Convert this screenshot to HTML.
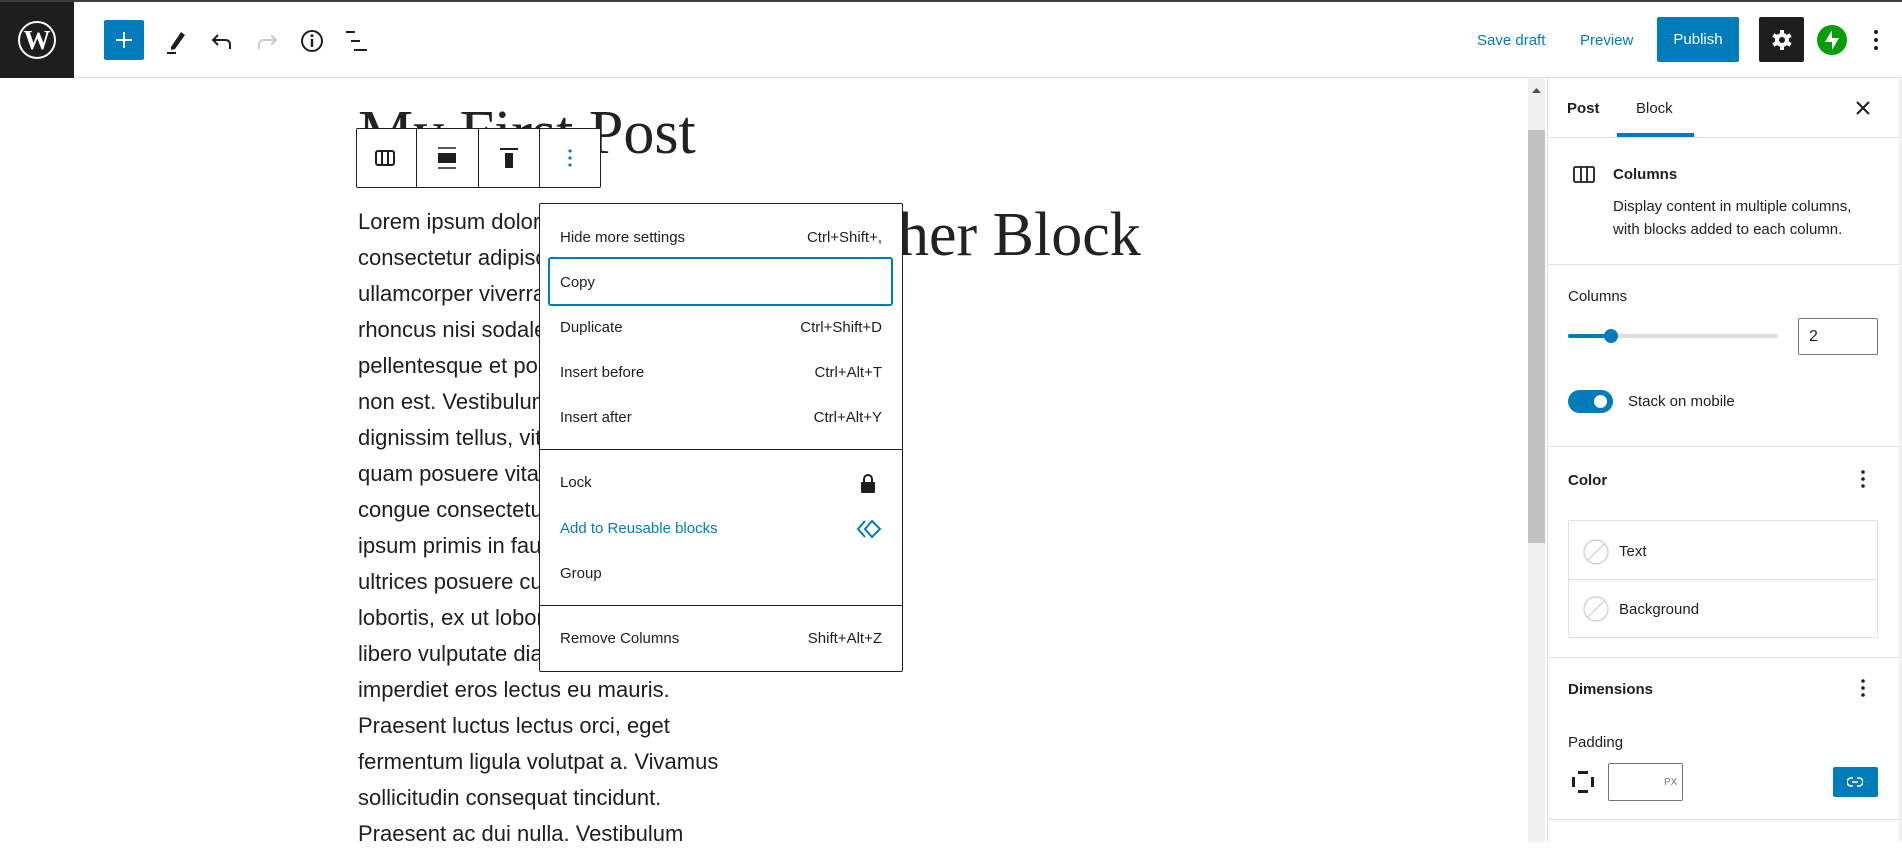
<!DOCTYPE html>
<html><head><meta charset="utf-8"><style>
*{margin:0;padding:0;box-sizing:border-box}
body{width:1902px;height:842px;overflow:hidden;background:#fff;font-family:"Liberation Sans",sans-serif;color:#1e1e1e;position:relative}
.a{position:absolute}
.ui{font-size:15px;white-space:nowrap}
.p{position:absolute;left:358px;font-size:22px;white-space:nowrap;color:#1e1e1e;line-height:36px}
.mi{position:absolute;left:560px;font-size:15px;white-space:nowrap}
.ms{position:absolute;right:1020px;font-size:15px;white-space:nowrap}
.hr{position:absolute;height:1px;background:#e0e0e0}
</style></head><body>
<div class="a" style="left:0;top:0;width:1902px;height:2px;background:#3c3c3c"></div>
<!-- header -->
<div class="a" style="left:0;top:2px;width:74px;height:76px;background:#1e1e1e"></div>
<svg class="a" style="left:17px;top:20px" width="40" height="40" viewBox="0 0 40 40">
<circle cx="20" cy="20" r="18" fill="none" stroke="#fff" stroke-width="2"/>
<text x="20" y="29" text-anchor="middle" font-family="Liberation Serif" font-weight="bold" font-size="27" fill="#fff">W</text></svg>
<div class="hr" style="left:74px;top:77px;width:1828px"></div>
<div class="a" style="left:104px;top:20px;width:40px;height:40px;background:#007cba;border-radius:2px"></div>
<svg class="a" style="left:104px;top:20px" width="40" height="40"><path d="M20 12v16M12 20h16" stroke="#fff" stroke-width="2"/></svg>
<svg class="a" style="left:165px;top:28px" width="24" height="26" viewBox="0 0 24 26"><path d="M6 19 L16 4 L20 7 L10 21 L6 22 Z" fill="#1e1e1e"/><path d="M2 25h9" stroke="#1e1e1e" stroke-width="2"/></svg>
<svg class="a" style="left:210px;top:29px" width="24" height="24" viewBox="0 0 24 24"><path d="M8 6 L3 11 L8 16 M3 11 H15 Q20 11 20 16 V20" fill="none" stroke="#1e1e1e" stroke-width="2"/></svg>
<svg class="a" style="left:255px;top:29px" width="24" height="24" viewBox="0 0 24 24"><path d="M16 6 L21 11 L16 16 M21 11 H9 Q4 11 4 16 V20" fill="none" stroke="#ccc" stroke-width="2"/></svg>
<svg class="a" style="left:300px;top:29px" width="24" height="24" viewBox="0 0 24 24"><circle cx="12" cy="12" r="10" fill="none" stroke="#1e1e1e" stroke-width="2"/><path d="M12 10v8" stroke="#1e1e1e" stroke-width="2.4"/><circle cx="12" cy="6.8" r="1.5" fill="#1e1e1e"/></svg>
<svg class="a" style="left:345px;top:29px" width="24" height="24" viewBox="0 0 24 24"><path d="M1 3h9M6 12h9M9 21h13" stroke="#1e1e1e" stroke-width="2"/></svg>
<div class="a ui" style="left:1477px;top:32px;color:#007cba">Save draft</div>
<div class="a ui" style="left:1580px;top:32px;color:#007cba">Preview</div>
<div class="a" style="left:1657px;top:17px;width:82px;height:45px;background:#007cba;border-radius:2px;color:#fff;font-size:15px;text-align:center;line-height:45px">Publish</div>
<div class="a" style="left:1759px;top:17px;width:45px;height:45px;background:#1e1e1e;border-radius:2px"></div>
<svg class="a" style="left:1770px;top:28px" width="24" height="24" viewBox="0 0 24 24"><g fill="#fff"><circle cx="12" cy="12" r="7"/><rect x="10" y="2" width="4" height="20"/><rect x="10" y="2" width="4" height="20" transform="rotate(60 12 12)"/><rect x="10" y="2" width="4" height="20" transform="rotate(120 12 12)"/></g><circle cx="12" cy="12" r="3" fill="#1e1e1e"/></svg>
<svg class="a" style="left:1817px;top:25px" width="30" height="30" viewBox="0 0 30 30"><circle cx="15" cy="15" r="15" fill="#069e08"/><path d="M15 5 V17 H8 Z M15 25 V13 H22 Z" fill="#fff"/></svg>
<svg class="a" style="left:1870px;top:28px" width="12" height="24"><circle cx="6" cy="4" r="2" fill="#1e1e1e"/><circle cx="6" cy="12" r="2" fill="#1e1e1e"/><circle cx="6" cy="20" r="2" fill="#1e1e1e"/></svg>

<!-- editor -->
<div class="a" style="left:358px;top:98px;font-family:'Liberation Serif',serif;font-size:62px;color:#222;white-space:nowrap">My First Post</div>
<div class="a" style="left:774px;top:200px;font-family:'Liberation Serif',serif;font-size:62px;color:#222;white-space:nowrap">Another Block</div>
<div class="p" style="top:204px">Lorem ipsum dolor sit amet,</div>
<div class="p" style="top:240px">consectetur adipiscing elit.</div>
<div class="p" style="top:276px">ullamcorper viverra nibh</div>
<div class="p" style="top:312px">rhoncus nisi sodales at</div>
<div class="p" style="top:348px">pellentesque et porta</div>
<div class="p" style="top:384px">non est. Vestibulum ac</div>
<div class="p" style="top:420px">dignissim tellus, vitae</div>
<div class="p" style="top:456px">quam posuere vitae</div>
<div class="p" style="top:492px">congue consectetur</div>
<div class="p" style="top:528px">ipsum primis in faucibus</div>
<div class="p" style="top:564px">ultrices posuere cubilia</div>
<div class="p" style="top:600px">lobortis, ex ut lobortis</div>
<div class="p" style="top:636px">libero vulputate diam</div>
<div class="p" style="top:672px">imperdiet eros lectus eu mauris.</div>
<div class="p" style="top:708px">Praesent luctus lectus orci, eget</div>
<div class="p" style="top:744px">fermentum ligula volutpat a. Vivamus</div>
<div class="p" style="top:780px">sollicitudin consequat tincidunt.</div>
<div class="p" style="top:816px">Praesent ac dui nulla. Vestibulum</div>

<!-- block toolbar -->
<div class="a" style="left:356px;top:128px;width:245px;height:60px;background:#fff;border:1px solid #1e1e1e;border-radius:2px"></div>
<div class="a" style="left:416px;top:128px;width:1px;height:60px;background:#1e1e1e"></div>
<div class="a" style="left:478px;top:128px;width:1px;height:60px;background:#1e1e1e"></div>
<div class="a" style="left:539px;top:128px;width:1px;height:60px;background:#1e1e1e"></div>
<svg class="a" style="left:375px;top:150px" width="20" height="16"><rect x="1" y="1" width="18" height="14" rx="2" fill="none" stroke="#1e1e1e" stroke-width="2"/><path d="M7 1v14M13 1v14" stroke="#1e1e1e" stroke-width="2"/></svg>
<svg class="a" style="left:437px;top:147px" width="20" height="22"><path d="M1 1h18M1 21h18" stroke="#1e1e1e" stroke-width="1.5"/><rect x="1" y="6" width="18" height="10" fill="#1e1e1e"/></svg>
<svg class="a" style="left:499px;top:148px" width="20" height="20"><path d="M1 1h18" stroke="#1e1e1e" stroke-width="2"/><rect x="6" y="5" width="8" height="15" fill="#1e1e1e"/></svg>
<svg class="a" style="left:566px;top:148px" width="8" height="20"><circle cx="4" cy="3" r="1.6" fill="#007cba"/><circle cx="4" cy="10" r="1.6" fill="#007cba"/><circle cx="4" cy="17" r="1.6" fill="#007cba"/></svg>

<!-- menu -->
<div class="a" style="left:539px;top:203px;width:364px;height:469px;background:#fff;border:1px solid #1e1e1e;border-radius:2px"></div>
<div class="mi" style="top:229px">Hide more settings</div><div class="ms" style="top:229px">Ctrl+Shift+,</div>
<div class="a" style="left:548px;top:257px;width:345px;height:49px;border:2px solid #007cba;border-radius:3px"></div>
<div class="mi" style="top:274px">Copy</div>
<div class="mi" style="top:319px">Duplicate</div><div class="ms" style="top:319px">Ctrl+Shift+D</div>
<div class="mi" style="top:364px">Insert before</div><div class="ms" style="top:364px">Ctrl+Alt+T</div>
<div class="mi" style="top:409px">Insert after</div><div class="ms" style="top:409px">Ctrl+Alt+Y</div>
<div class="a" style="left:540px;top:449px;width:362px;height:1px;background:#1e1e1e"></div>
<div class="mi" style="top:474px">Lock</div>
<svg class="a" style="left:859px;top:472px" width="18" height="22"><path d="M5 10V7a4 4 0 0 1 8 0v3" fill="none" stroke="#1e1e1e" stroke-width="2"/><rect x="2" y="10" width="14" height="11" rx="1" fill="#1e1e1e"/></svg>
<div class="mi" style="top:520px;color:#007cba">Add to Reusable blocks</div>
<svg class="a" style="left:856px;top:518px" width="26" height="22"><path d="M9 3 L2 11 L9 19 M16 3 L24 11 L16 19 L9 11 Z" fill="none" stroke="#007cba" stroke-width="2"/></svg>
<div class="mi" style="top:565px">Group</div>
<div class="a" style="left:540px;top:605px;width:362px;height:1px;background:#1e1e1e"></div>
<div class="mi" style="top:630px">Remove Columns</div><div class="ms" style="top:630px">Shift+Alt+Z</div>

<!-- scrollbar -->
<div class="a" style="left:1528px;top:78px;width:17px;height:764px;background:#f0f0f0"></div>
<div class="a" style="left:1528px;top:130px;width:17px;height:413px;background:#c1c1c1"></div>
<svg class="a" style="left:1531px;top:86px" width="11" height="8"><path d="M1 7 L5.5 2 L10 7 Z" fill="#505050"/></svg>

<!-- sidebar -->
<div class="a" style="left:1547px;top:78px;width:1px;height:764px;background:#e0e0e0"></div>
<div class="a" style="left:1899px;top:78px;width:3px;height:764px;background:#f0f0f0"></div>
<div class="a ui" style="left:1567px;top:100px;font-weight:bold;font-size:15px">Post</div>
<div class="a ui" style="left:1636px;top:100px;font-size:15px">Block</div>
<div class="a" style="left:1617px;top:133px;width:77px;height:4px;background:#007cba"></div>
<div class="hr" style="left:1548px;top:137px;width:351px"></div>
<svg class="a" style="left:1856px;top:101px" width="14" height="14"><path d="M1 1L13 13M13 1L1 13" stroke="#1e1e1e" stroke-width="2"/></svg>
<svg class="a" style="left:1573px;top:166px" width="22" height="17"><rect x="1" y="1" width="20" height="15" rx="1.5" fill="none" stroke="#1e1e1e" stroke-width="1.8"/><path d="M8 1v15M14 1v15" stroke="#1e1e1e" stroke-width="1.8"/></svg>
<div class="a ui" style="left:1613px;top:166px;font-weight:bold">Columns</div>
<div class="a ui" style="left:1613px;top:195px;line-height:23px">Display content in multiple columns,<br>with blocks added to each column.</div>
<div class="hr" style="left:1548px;top:264px;width:351px"></div>
<div class="a ui" style="left:1568px;top:288px">Columns</div>
<div class="a" style="left:1568px;top:334px;width:210px;height:4px;background:#ddd;border-radius:2px"></div>
<div class="a" style="left:1568px;top:334px;width:43px;height:4px;background:#007cba;border-radius:2px"></div>
<div class="a" style="left:1604px;top:329px;width:14px;height:14px;background:#007cba;border-radius:50%"></div>
<div class="a" style="left:1798px;top:318px;width:80px;height:37px;border:1px solid #757575;border-radius:2px;font-size:16px;padding:9px 0 0 10px">2</div>
<div class="a" style="left:1568px;top:390px;width:45px;height:23px;background:#007cba;border-radius:12px"></div>
<div class="a" style="left:1594px;top:395px;width:13px;height:13px;background:#fff;border-radius:50%"></div>
<div class="a ui" style="left:1628px;top:393px">Stack on mobile</div>
<div class="hr" style="left:1548px;top:446px;width:351px"></div>
<div class="a ui" style="left:1568px;top:472px;font-weight:bold">Color</div>
<svg class="a" style="left:1860px;top:469px" width="6" height="20"><circle cx="3" cy="3" r="1.8" fill="#1e1e1e"/><circle cx="3" cy="10" r="1.8" fill="#1e1e1e"/><circle cx="3" cy="17" r="1.8" fill="#1e1e1e"/></svg>
<div class="a" style="left:1568px;top:520px;width:310px;height:118px;border:1px solid #e0e0e0;border-radius:2px"></div>
<div class="hr" style="left:1569px;top:579px;width:308px"></div>
<svg class="a" style="left:1583px;top:539px" width="26" height="26"><circle cx="13" cy="13" r="12" fill="none" stroke="#ccc" stroke-width="1.2"/><path d="M5 21L21 5" stroke="#ccc" stroke-width="1.2"/></svg>
<svg class="a" style="left:1583px;top:596px" width="26" height="26"><circle cx="13" cy="13" r="12" fill="none" stroke="#ccc" stroke-width="1.2"/><path d="M5 21L21 5" stroke="#ccc" stroke-width="1.2"/></svg>
<div class="a ui" style="left:1619px;top:543px">Text</div>
<div class="a ui" style="left:1619px;top:601px">Background</div>
<div class="hr" style="left:1548px;top:657px;width:351px"></div>
<div class="a ui" style="left:1568px;top:681px;font-weight:bold">Dimensions</div>
<svg class="a" style="left:1860px;top:678px" width="6" height="20"><circle cx="3" cy="3" r="1.8" fill="#1e1e1e"/><circle cx="3" cy="10" r="1.8" fill="#1e1e1e"/><circle cx="3" cy="17" r="1.8" fill="#1e1e1e"/></svg>
<div class="a ui" style="left:1568px;top:734px">Padding</div>
<svg class="a" style="left:1572px;top:771px" width="22" height="22"><path d="M6 1.5h10M6 20.5h10M1.5 6v10M20.5 6v10" stroke="#1e1e1e" stroke-width="3"/></svg>
<div class="a" style="left:1608px;top:763px;width:75px;height:38px;border:1px solid #757575;border-radius:2px"></div>
<div class="a" style="left:1664px;top:777px;font-size:10px;color:#757575">PX</div>
<div class="a" style="left:1833px;top:767px;width:45px;height:30px;background:#007cba;border-radius:2px"></div>
<svg class="a" style="left:1847px;top:775px" width="16" height="14"><path d="M6 3H4a4 4 0 0 0 0 8h2M10 3h2a4 4 0 0 1 0 8h-2M5 7h6" fill="none" stroke="#fff" stroke-width="1.6"/></svg>
<div class="hr" style="left:1548px;top:819px;width:351px"></div>
</body></html>
